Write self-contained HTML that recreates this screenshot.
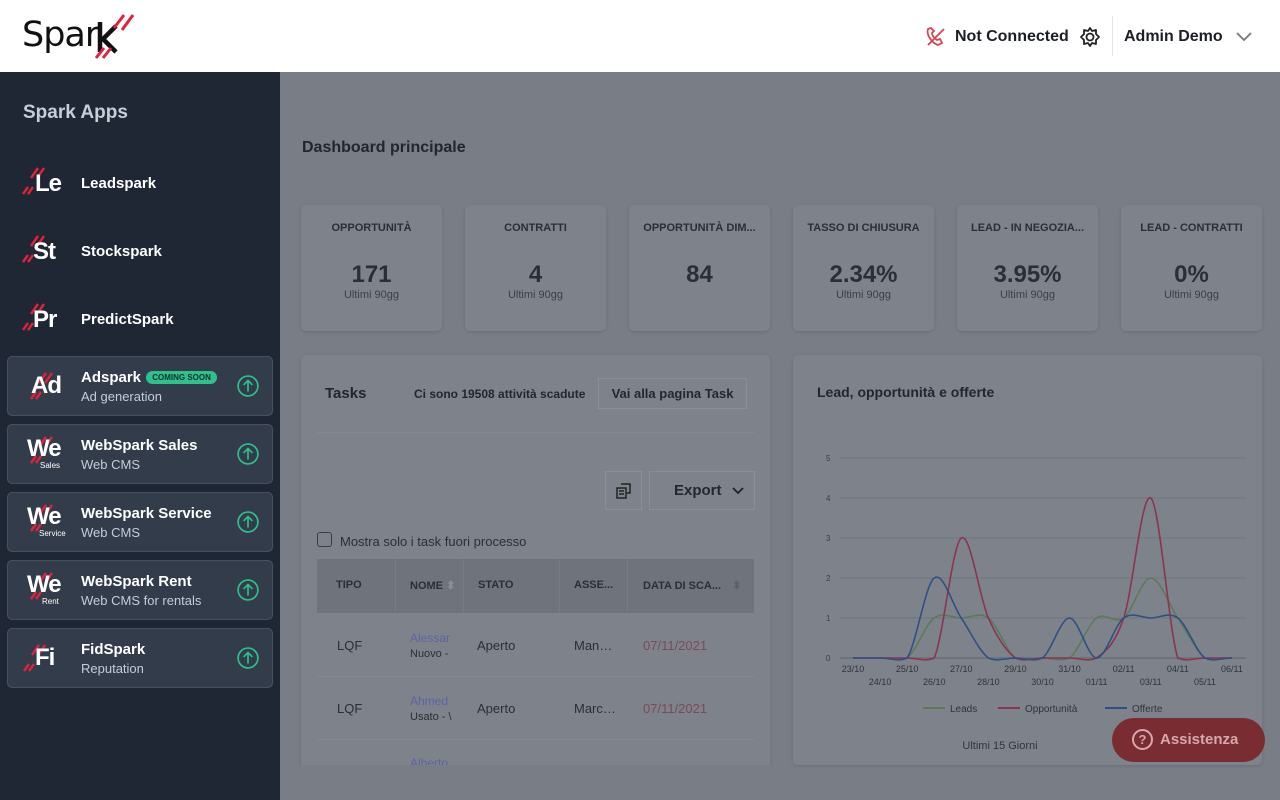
<!DOCTYPE html>
<html><head><meta charset="utf-8"><style>
*{box-sizing:border-box;margin:0;padding:0}
body{width:1280px;height:800px;overflow:hidden;font-family:"Liberation Sans",sans-serif;background:#787d86;position:relative}
.top{position:absolute;left:0;top:0;width:1280px;height:72px;background:#fff}
.side{position:absolute;left:0;top:72px;width:280px;height:728px;background:#1f2734}
.abs{position:absolute}
.app{position:absolute;left:23px;color:#fff;font-weight:bold;font-size:15px}
.item{position:absolute;left:7px;width:266px;height:60px;background:#333c4b;border:1px solid #465062;border-radius:5px}
.item .t{position:absolute;left:73px;top:12px;color:#fff;font-weight:bold;font-size:15px}
.item .s{position:absolute;left:73px;top:32px;color:#c5ccd8;font-size:13px}
.item .up{position:absolute;left:230px;top:18px;width:22px;height:22px;border-radius:50%}
.logo{position:absolute;font-weight:bold;color:#fff;font-size:24px;letter-spacing:-1px}
.card{position:absolute;background:#7e838b;border-radius:5px;box-shadow:0 1px 3px rgba(0,0,0,.12)}
.kpi{top:205px;width:141px;height:126px;text-align:center;color:#2a2f37}
.kpi .h{font-size:11px;font-weight:bold;margin-top:17px}
.kpi .v{font-size:24px;font-weight:bold;margin-top:27px}
.kpi .u{font-size:11px;color:#3b4048;margin-top:0}
.btn{position:absolute;border:1px solid #8a8f97;background:#7e838b;color:#23272e;font-weight:bold}
</style></head><body>
<div class="top">
<div class="abs" style="left:22px;top:15px;font-size:35px;color:#111;font-family:'DejaVu Sans',sans-serif;letter-spacing:-1px">Spar</div>
<svg class="abs" style="left:92px;top:12px" width="56" height="50"><path d="M8 10 L8 40 M24 14 L11 27 L24 40" stroke="#111" stroke-width="4.5" fill="none"/><path d="M22 16 L32 3 M30 18 L41 3 M4 46 L12 36 M11 46 L19 36" stroke="#e3213c" stroke-width="3"/></svg>
<svg class="abs" style="left:924px;top:25px" width="24" height="24"><path d="M4 4 C2 10 8 18 14 20 L18 18 L16 14 L13 15 C10 13 8 10 8 8 L10 6 L7 3 Z M4 20 L20 4" stroke="#d94452" stroke-width="1.8" fill="none"/></svg>
<div class="abs" style="left:955px;top:28px;font-weight:bold;font-size:16px;color:#1b1e23">Not Connected</div>
<svg class="abs" style="left:1079px;top:26px" width="22" height="22"><circle cx="11" cy="11" r="3.5" stroke="#222" stroke-width="1.8" fill="none"/><path d="M11 2 L13 5 L17 4 L17 8 L20 11 L17 14 L17 18 L13 17 L11 20 L9 17 L5 18 L5 14 L2 11 L5 8 L5 4 L9 5 Z" stroke="#222" stroke-width="1.8" fill="none" stroke-linejoin="round"/></svg>
<div class="abs" style="left:1112px;top:16px;width:1px;height:40px;background:#e4e4e4"></div>
<div class="abs" style="left:1124px;top:28px;font-weight:bold;font-size:16px;color:#1b1e23">Admin Demo</div>
<svg class="abs" style="left:1236px;top:32px" width="16" height="10"><path d="M1 1 L8 8 L15 1" stroke="#777" stroke-width="1.8" fill="none"/></svg>
</div>
<div class="side">
<div class="abs" style="left:23px;top:30px;color:#c8ced8;font-size:19px;font-weight:bold">Spark Apps</div>
</div>
<svg width="0" height="0" style="position:absolute"><defs><g id="sl"><path d="M9 14 L16 4 M15 14 L22 4 M1 30 L6 23 M6 30 L11 23" stroke="#e3213c" stroke-width="2.4"/></g></defs></svg>
<svg class="abs" style="left:22px;top:164px" width="24" height="32"><use href="#sl"/></svg><div class="logo" style="left:35px;top:170px">Le</div><div class="app" style="left:81px;top:175px">Leadspark</div>
<svg class="abs" style="left:22px;top:232px" width="24" height="32"><use href="#sl"/></svg><div class="logo" style="left:33px;top:238px">St</div><div class="app" style="left:81px;top:243px">Stockspark</div>
<svg class="abs" style="left:22px;top:300px" width="24" height="32"><use href="#sl"/></svg><div class="logo" style="left:33px;top:306px">Pr</div><div class="app" style="left:81px;top:311px">PredictSpark</div>

<div class="item" style="top:356px"><svg class="abs" style="left:22px;top:12px" width="24" height="32"><use href="#sl"/></svg><div class="logo" style="left:23px;top:15px">Ad</div><div class="t">Adspark <span style="display:inline-block;vertical-align:2px;background:#2fc18c;color:#10322a;font-size:8px;padding:2px 6px;border-radius:8px;margin-left:1px">COMING SOON</span></div><div class="s">Ad generation</div><svg class="up" viewBox="0 0 20 20" style="left:229px"><circle cx="10" cy="10" r="9" stroke="#2fc18c" stroke-width="1.5" fill="none"/><path d="M10 15 V5 M6 9 L10 5 L14 9" stroke="#2fc18c" stroke-width="1.5" fill="none"/></svg></div>
<div class="item" style="top:424px"><svg class="abs" style="left:22px;top:8px" width="24" height="32"><use href="#sl"/></svg><div class="logo" style="left:19px;top:10px">We</div><div class="abs" style="left:32px;top:36px;color:#fff;font-size:8px">Sales</div><div class="t">WebSpark Sales</div><div class="s">Web CMS</div><svg class="up" viewBox="0 0 20 20" style="left:229px"><circle cx="10" cy="10" r="9" stroke="#2fc18c" stroke-width="1.5" fill="none"/><path d="M10 15 V5 M6 9 L10 5 L14 9" stroke="#2fc18c" stroke-width="1.5" fill="none"/></svg></div>
<div class="item" style="top:492px"><svg class="abs" style="left:22px;top:8px" width="24" height="32"><use href="#sl"/></svg><div class="logo" style="left:19px;top:10px">We</div><div class="abs" style="left:31px;top:36px;color:#fff;font-size:8px">Service</div><div class="t">WebSpark Service</div><div class="s">Web CMS</div><svg class="up" viewBox="0 0 20 20" style="left:229px"><circle cx="10" cy="10" r="9" stroke="#2fc18c" stroke-width="1.5" fill="none"/><path d="M10 15 V5 M6 9 L10 5 L14 9" stroke="#2fc18c" stroke-width="1.5" fill="none"/></svg></div>
<div class="item" style="top:560px"><svg class="abs" style="left:22px;top:8px" width="24" height="32"><use href="#sl"/></svg><div class="logo" style="left:19px;top:10px">We</div><div class="abs" style="left:34px;top:36px;color:#fff;font-size:8px">Rent</div><div class="t">WebSpark Rent</div><div class="s">Web CMS for rentals</div><svg class="up" viewBox="0 0 20 20" style="left:229px"><circle cx="10" cy="10" r="9" stroke="#2fc18c" stroke-width="1.5" fill="none"/><path d="M10 15 V5 M6 9 L10 5 L14 9" stroke="#2fc18c" stroke-width="1.5" fill="none"/></svg></div>
<div class="item" style="top:628px"><svg class="abs" style="left:15px;top:12px" width="24" height="32"><use href="#sl"/></svg><div class="logo" style="left:27px;top:15px">Fi</div><div class="t">FidSpark</div><div class="s">Reputation</div><svg class="up" viewBox="0 0 20 20" style="left:229px"><circle cx="10" cy="10" r="9" stroke="#2fc18c" stroke-width="1.5" fill="none"/><path d="M10 15 V5 M6 9 L10 5 L14 9" stroke="#2fc18c" stroke-width="1.5" fill="none"/></svg></div>

<div class="abs" style="left:302px;top:139px;font-weight:bold;font-size:16px;color:#22262d">Dashboard principale</div>
<div class="card kpi" style="left:301px"><div class="h">OPPORTUNITÀ</div><div class="v">171</div><div class="u">Ultimi 90gg</div></div>
<div class="card kpi" style="left:465px"><div class="h">CONTRATTI</div><div class="v">4</div><div class="u">Ultimi 90gg</div></div>
<div class="card kpi" style="left:629px"><div class="h">OPPORTUNITÀ DIM...</div><div class="v">84</div></div>
<div class="card kpi" style="left:793px"><div class="h">TASSO DI CHIUSURA</div><div class="v">2.34%</div><div class="u">Ultimi 90gg</div></div>
<div class="card kpi" style="left:957px"><div class="h">LEAD - IN NEGOZIA...</div><div class="v">3.95%</div><div class="u">Ultimi 90gg</div></div>
<div class="card kpi" style="left:1121px"><div class="h">LEAD - CONTRATTI</div><div class="v">0%</div><div class="u">Ultimi 90gg</div></div>

<div class="card" style="left:301px;top:355px;width:469px;height:420px">
<div class="abs" style="left:24px;top:30px;font-weight:bold;font-size:15px;color:#22262d">Tasks</div>
<div class="abs" style="left:113px;top:32px;font-weight:bold;font-size:12px;color:#22262d">Ci sono 19508 attività scadute</div>
<div class="btn" style="left:297px;top:23px;width:149px;height:31px;font-size:13px;text-align:center;line-height:29px">Vai alla pagina Task</div>
<div class="abs" style="left:16px;top:77px;width:437px;height:1px;background:#858a92"></div>
<div class="btn" style="left:304px;top:116px;width:37px;height:39px"><svg style="position:absolute;left:10px;top:11px" width="16" height="16"><path d="M5 1 H14 V10 H11 M1 5 H10 V15 H1 Z M3 8 H8 M3 11 H8" stroke="#222" stroke-width="1.5" fill="none"/></svg></div>
<div class="btn" style="left:348px;top:116px;width:106px;height:39px;font-size:15px;line-height:37px;padding-left:24px">Export<svg style="position:absolute;left:82px;top:15px" width="12" height="8"><path d="M1 1 L6 6 L11 1" stroke="#222" stroke-width="1.8" fill="none"/></svg></div>
<div class="abs" style="left:16px;top:177px;width:15px;height:15px;border:1.5px solid #3a3f46;border-radius:3px"></div>
<div class="abs" style="left:39px;top:179px;font-size:13px;color:#2a2f37">Mostra solo i task fuori processo</div>
<div class="abs" style="left:16px;top:204px;width:437px;height:54px;background:#6f747c"></div>
<div class="abs" style="left:94px;top:204px;width:1px;height:54px;background:#787d85"></div>
<div class="abs" style="left:162px;top:204px;width:1px;height:54px;background:#787d85"></div>
<div class="abs" style="left:258px;top:204px;width:1px;height:54px;background:#787d85"></div>
<div class="abs" style="left:326px;top:204px;width:1px;height:54px;background:#787d85"></div>
<div class="abs" style="left:35px;top:224px;font-size:11px;font-weight:bold;color:#2a2f37">TIPO</div>
<div class="abs" style="left:109px;top:224px;font-size:11px;font-weight:bold;color:#2a2f37">NOME <span style="color:#8a8f97">⬍</span></div>
<div class="abs" style="left:177px;top:224px;font-size:11px;font-weight:bold;color:#2a2f37">STATO</div>
<div class="abs" style="left:273px;top:224px;font-size:11px;font-weight:bold;color:#2a2f37">ASSE...</div>
<div class="abs" style="left:342px;top:224px;font-size:11px;font-weight:bold;color:#2a2f37">DATA DI SCA... <span style="color:#5d6269;margin-left:8px">⬍</span></div>
<div class="abs" style="left:16px;top:321px;width:437px;height:1px;background:#858a92"></div>
<div class="abs" style="left:16px;top:384px;width:437px;height:1px;background:#858a92"></div>
<div class="abs" style="left:36px;top:283px;font-size:13px;color:#2a2f37">LQF</div>
<div class="abs" style="left:109px;top:276px;font-size:12px;color:#5b64a0;width:40px;overflow:hidden;white-space:nowrap">Alessandro</div>
<div class="abs" style="left:109px;top:293px;font-size:11px;color:#2a2f37">Nuovo -</div>
<div class="abs" style="left:176px;top:283px;font-size:13px;color:#2a2f37">Aperto</div>
<div class="abs" style="left:273px;top:283px;font-size:13px;color:#2a2f37">Man…</div>
<div class="abs" style="left:342px;top:283px;font-size:13px;color:#7a4a5a">07/11/2021</div>
<div class="abs" style="left:36px;top:346px;font-size:13px;color:#2a2f37">LQF</div>
<div class="abs" style="left:109px;top:339px;font-size:12px;color:#5b64a0;width:40px;overflow:hidden;white-space:nowrap">Ahmed</div>
<div class="abs" style="left:109px;top:356px;font-size:11px;color:#2a2f37">Usato - \</div>
<div class="abs" style="left:176px;top:346px;font-size:13px;color:#2a2f37">Aperto</div>
<div class="abs" style="left:273px;top:346px;font-size:13px;color:#2a2f37">Marc…</div>
<div class="abs" style="left:342px;top:346px;font-size:13px;color:#7a4a5a">07/11/2021</div>
<div class="abs" style="left:109px;top:401px;font-size:12px;color:#5b64a0;height:9px;overflow:hidden">Alberto</div>
</div>
<div class="abs" style="left:280px;top:765px;width:1000px;height:35px;background:#787d86"></div>

<div class="card" style="left:793px;top:355px;width:469px;height:410px">
<div class="abs" style="left:24px;top:29px;font-weight:bold;font-size:14px;color:#22262d">Lead, opportunità e offerte</div>
</div>
<svg class="abs" style="left:793px;top:440px" width="469" height="320" id="ch"></svg>
<div class="abs" style="left:1112px;top:718px;width:153px;height:44px;background:#7a2c33;border-radius:22px;color:#d8a7ab;font-weight:bold;font-size:15px;line-height:44px;padding-left:48px">Assistenza<div class="abs" style="left:20px;top:11px;width:21px;height:21px;border:2px solid #d8a7ab;border-radius:50%;font-size:13px;line-height:17px;text-align:center;padding:0">?</div></div>
<script>
var s=document.getElementById('ch'),ox=793,oy=440,h='';
function X(i){return 853+i*27.07-ox}function Y(v){return 658-40*v-oy}
for(var v=0;v<=5;v++){h+='<line x1="47" x2="453" y1="'+Y(v)+'" y2="'+Y(v)+'" stroke="#6a6f77" stroke-width="'+(v?0.8:1.5)+'"/>';h+='<line x1="47" x2="453" y1="'+(Y(v)-20)+'" y2="'+(Y(v)-20)+'" stroke="#80858c" stroke-width="0.6"/>';h+='<text x="33" y="'+(Y(v)+3)+'" font-size="8" fill="#3a3f46">'+v+'</text>';}
var d=['23/10','24/10','25/10','26/10','27/10','28/10','29/10','30/10','31/10','01/11','02/11','03/11','04/11','05/11','06/11'];
d.forEach(function(t,i){h+='<text x="'+X(i)+'" y="'+(Y(0)+(i%2?27:14))+'" font-size="9" text-anchor="middle" fill="#2f343b">'+t+'</text>';});
function P(a,c){var p='M'+X(0)+' '+Y(a[0]);for(var i=0;i<a.length-1;i++){var p0=a[Math.max(i-1,0)],p1=a[i],p2=a[i+1],p3=a[Math.min(i+2,a.length-1)];var c1=p1+(p2-p0)/6,c2=p2-(p3-p1)/6;c1=Math.max(c1,-0.1);c2=Math.max(c2,-0.1);p+=' C'+(X(i)+9)+' '+Y(c1)+' '+(X(i+1)-9)+' '+Y(c2)+' '+X(i+1)+' '+Y(p2);}h+='<path d="'+p+'" stroke="'+c+'" stroke-width="1.6" fill="none"/>';}
P([0,0,0,1,1,1,0,0,0,1,1,2,1,0,0],'#5c7a58');
P([0,0,0,0,3,1,0,0,0,0,1,4,0,0,0],'#8a3550');
P([0,0,0,2,1,0,0,0,1,0,1,1,1,0,0],'#2f4f86');
[['Leads','#5c7a58',130],['Opportunità','#8a3550',205],['Offerte','#2f4f86',312]].forEach(function(l){h+='<line x1="'+l[2]+'" x2="'+(l[2]+22)+'" y1="268" y2="268" stroke="'+l[1]+'" stroke-width="2"/><text x="'+(l[2]+27)+'" y="272" font-size="10" fill="#2f343b">'+l[0]+'</text>';});
h+='<text x="207" y="309" font-size="11" text-anchor="middle" fill="#2f343b">Ultimi 15 Giorni</text>';
s.innerHTML=h;
</script>
</body></html>
